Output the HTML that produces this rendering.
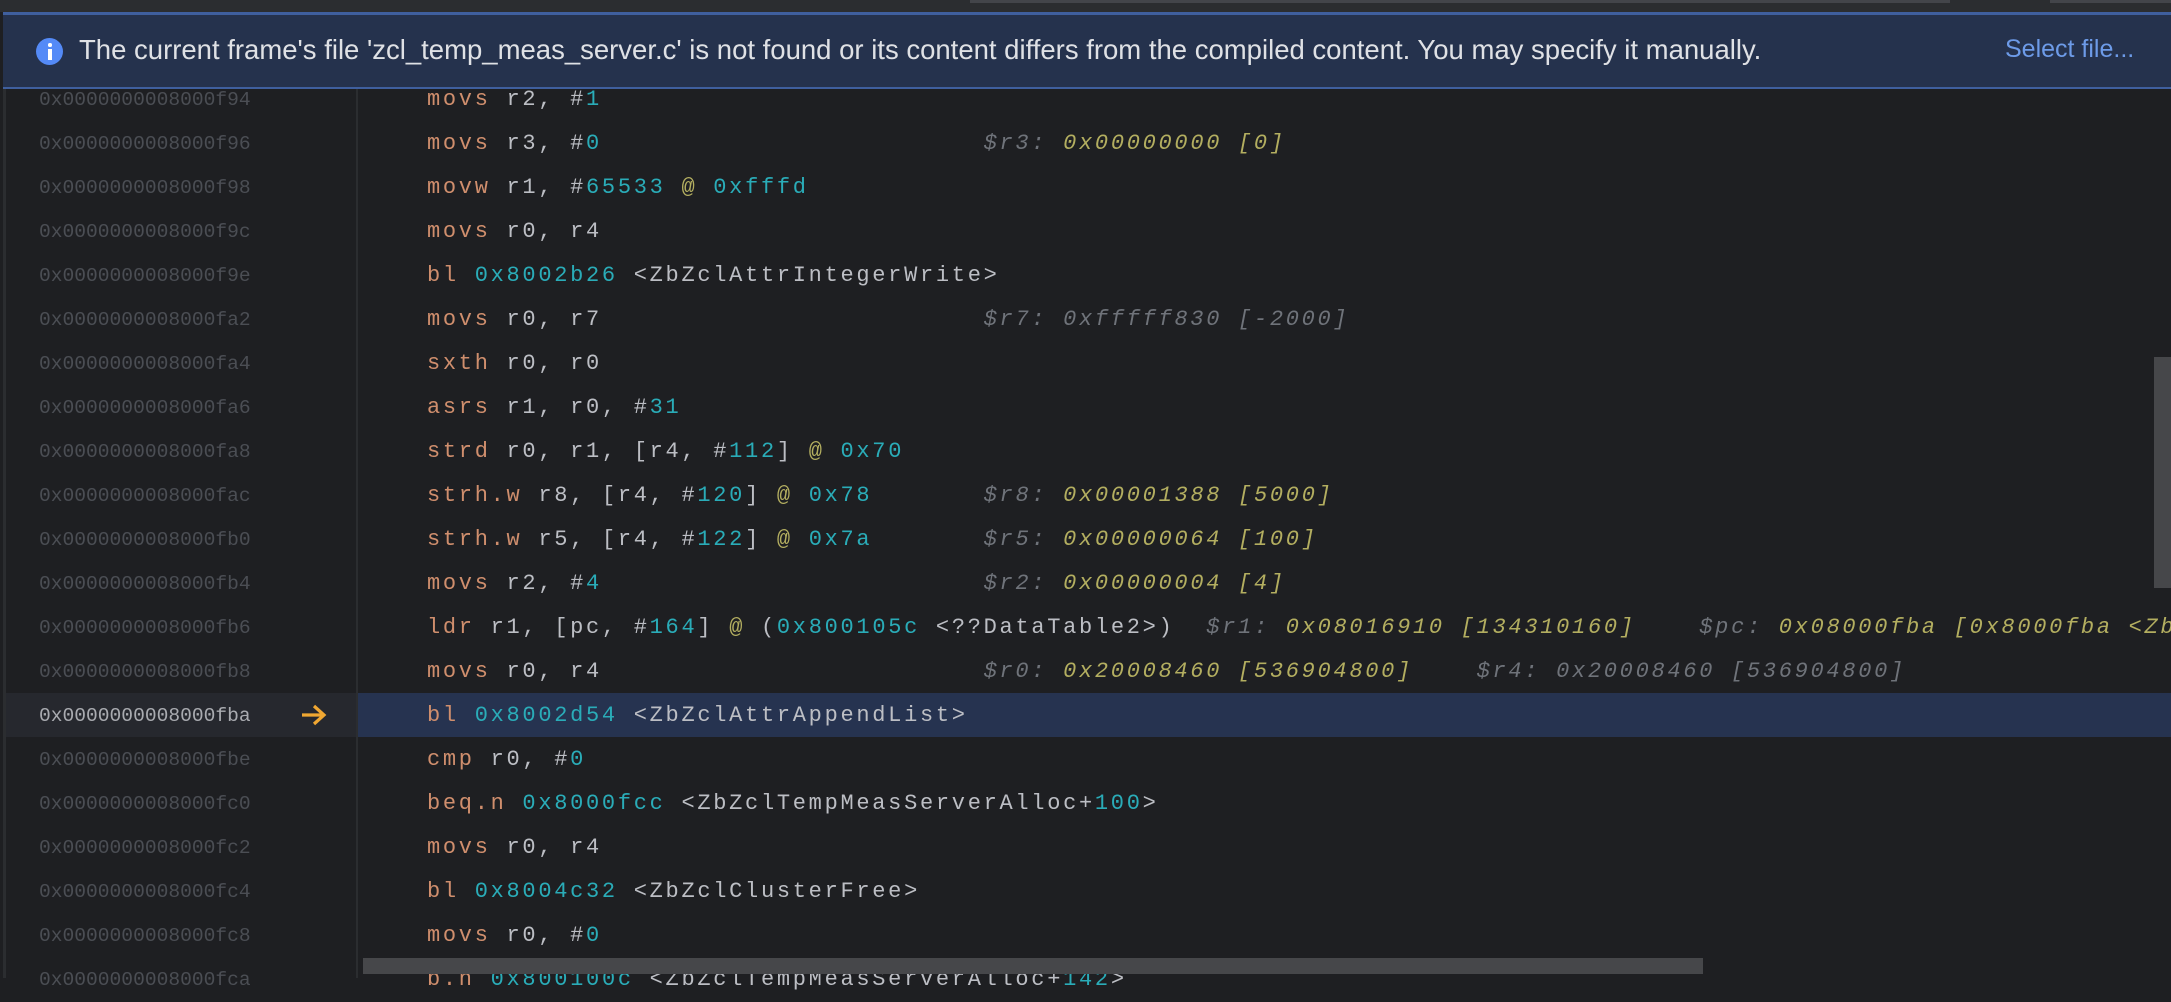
<!DOCTYPE html>
<html><head><meta charset="utf-8"><style>
*{margin:0;padding:0;box-sizing:border-box}
body{width:2171px;height:978px;overflow:hidden;background:#1e1f22;position:relative;font-family:"Liberation Mono",monospace;}
.top{position:absolute;left:0;top:0;width:2171px;height:12px;background:#2b2d30}
.top .t{position:absolute;top:0;height:3px;background:#43454a}
.banner{position:absolute;left:3px;top:12px;width:2168px;height:77px;background:#25324d;border-top:3px solid #3f5f9e;border-bottom:2px solid #3f5f9e;font-family:"Liberation Sans",sans-serif;font-size:27.5px;color:#dfe1e5;overflow:hidden}
.banner .msg{position:absolute;left:76px;top:19px;white-space:nowrap}
.banner .sel{position:absolute;left:2002px;top:20px;color:#6d9be8;white-space:nowrap;font-size:25px}
.icon{position:absolute;left:33px;top:23px;width:27px;height:27px;border-radius:50%;background:#548af7}
.icon:before{content:"";position:absolute;left:12px;top:5px;width:3.5px;height:3.5px;border-radius:50%;background:#fff}
.icon:after{content:"";position:absolute;left:12px;top:11px;width:3.5px;height:11px;background:#fff}
.lb{position:absolute;left:3px;top:89px;width:3px;height:889px;background:#2b2d30}
.div{position:absolute;left:356px;top:89px;width:2px;height:889px;background:#2b2d30}
.row{position:absolute;left:0;height:44px;width:2171px;font-size:19.6px;line-height:44px;white-space:pre;overflow:hidden}
.a{position:absolute;left:39px;color:#4b4e54}
.c{position:absolute;left:427px;color:#bcbec4;font-size:22px;letter-spacing:2.7px}
.m{color:#cf8e6d}.n{color:#2aacb8}.y{color:#b3ae60}
.g{color:#6f737a;font-style:italic}.v{color:#b3ae60;font-style:italic}.gv{color:#6f737a;font-style:italic}
.hlg{position:absolute;left:6px;top:693px;width:350px;height:44px;background:#26282e}
.hlc{position:absolute;left:358px;top:693px;width:1813px;height:44px;background:#263350}
.hs{position:absolute;left:363px;top:958px;width:1340px;height:16px;background:#46474a}
.vs{position:absolute;left:2154px;top:357px;width:17px;height:231px;background:#46474a}
</style></head><body>
<div class="hlg"></div><div class="hlc"></div>
<div class="lb"></div><div class="div"></div>

<div class="row" style="top:78px"><span class="a">0x0000000008000f94</span><span class="c"><span class="m">movs</span> r2, #<span class="n">1</span></span></div>
<div class="row" style="top:122px"><span class="a">0x0000000008000f96</span><span class="c"><span class="m">movs</span> r3, #<span class="n">0</span>                        <span class="g">$r3: </span><span class="v">0x00000000 [0]</span></span></div>
<div class="row" style="top:166px"><span class="a">0x0000000008000f98</span><span class="c"><span class="m">movw</span> r1, #<span class="n">65533</span> <span class="y">@</span> <span class="n">0xfffd</span></span></div>
<div class="row" style="top:210px"><span class="a">0x0000000008000f9c</span><span class="c"><span class="m">movs</span> r0, r4</span></div>
<div class="row" style="top:254px"><span class="a">0x0000000008000f9e</span><span class="c"><span class="m">bl</span> <span class="n">0x8002b26</span> &lt;ZbZclAttrIntegerWrite&gt;</span></div>
<div class="row" style="top:298px"><span class="a">0x0000000008000fa2</span><span class="c"><span class="m">movs</span> r0, r7                        <span class="g">$r7: 0xfffff830 [-2000]</span></span></div>
<div class="row" style="top:342px"><span class="a">0x0000000008000fa4</span><span class="c"><span class="m">sxth</span> r0, r0</span></div>
<div class="row" style="top:386px"><span class="a">0x0000000008000fa6</span><span class="c"><span class="m">asrs</span> r1, r0, #<span class="n">31</span></span></div>
<div class="row" style="top:430px"><span class="a">0x0000000008000fa8</span><span class="c"><span class="m">strd</span> r0, r1, [r4, #<span class="n">112</span>] <span class="y">@</span> <span class="n">0x70</span></span></div>
<div class="row" style="top:474px"><span class="a">0x0000000008000fac</span><span class="c"><span class="m">strh.w</span> r8, [r4, #<span class="n">120</span>] <span class="y">@</span> <span class="n">0x78</span>       <span class="g">$r8: </span><span class="v">0x00001388 [5000]</span></span></div>
<div class="row" style="top:518px"><span class="a">0x0000000008000fb0</span><span class="c"><span class="m">strh.w</span> r5, [r4, #<span class="n">122</span>] <span class="y">@</span> <span class="n">0x7a</span>       <span class="g">$r5: </span><span class="v">0x00000064 [100]</span></span></div>
<div class="row" style="top:562px"><span class="a">0x0000000008000fb4</span><span class="c"><span class="m">movs</span> r2, #<span class="n">4</span>                        <span class="g">$r2: </span><span class="v">0x00000004 [4]</span></span></div>
<div class="row" style="top:606px"><span class="a">0x0000000008000fb6</span><span class="c"><span class="m">ldr</span> r1, [pc, #<span class="n">164</span>] <span class="y">@</span> (<span class="n">0x800105c</span> &lt;??DataTable2&gt;)  <span class="g">$r1: </span><span class="v">0x08016910 [134310160]</span>    <span class="g">$pc: </span><span class="v">0x08000fba [0x8000fba &lt;Zb</span></span></div>
<div class="row" style="top:650px"><span class="a">0x0000000008000fb8</span><span class="c"><span class="m">movs</span> r0, r4                        <span class="g">$r0: </span><span class="v">0x20008460 [536904800]</span>    <span class="gv">$r4: 0x20008460 [536904800]</span></span></div>
<div class="row" style="top:694px"><span class="a" style="color:#a9abb0">0x0000000008000fba</span><span class="c"><span class="m">bl</span> <span class="n">0x8002d54</span> &lt;ZbZclAttrAppendList&gt;</span></div>
<svg style="position:absolute;left:301px;top:704px" width="26" height="22" viewBox="0 0 26 22"><path d="M1 11H22M13 2L23 11L13 20" stroke="#f0a732" stroke-width="3.2" fill="none"/></svg>
<div class="row" style="top:738px"><span class="a">0x0000000008000fbe</span><span class="c"><span class="m">cmp</span> r0, #<span class="n">0</span></span></div>
<div class="row" style="top:782px"><span class="a">0x0000000008000fc0</span><span class="c"><span class="m">beq.n</span> <span class="n">0x8000fcc</span> &lt;ZbZclTempMeasServerAlloc+<span class="n">100</span>&gt;</span></div>
<div class="row" style="top:826px"><span class="a">0x0000000008000fc2</span><span class="c"><span class="m">movs</span> r0, r4</span></div>
<div class="row" style="top:870px"><span class="a">0x0000000008000fc4</span><span class="c"><span class="m">bl</span> <span class="n">0x8004c32</span> &lt;ZbZclClusterFree&gt;</span></div>
<div class="row" style="top:914px"><span class="a">0x0000000008000fc8</span><span class="c"><span class="m">movs</span> r0, #<span class="n">0</span></span></div>
<div class="row" style="top:958px"><span class="a">0x0000000008000fca</span><span class="c"><span class="m">b.n</span> <span class="n">0x800100c</span> &lt;ZbZclTempMeasServerAlloc+<span class="n">142</span>&gt;</span></div>

<div class="hs"></div><div class="vs"></div>

<div class="top"><div class="t" style="left:970px;width:980px"></div><div class="t" style="left:2050px;width:121px"></div></div>
<div class="banner"><div class="icon"></div><span class="msg">The current frame's file 'zcl_temp_meas_server.c' is not found or its content differs from the compiled content. You may specify it manually.</span><span class="sel">Select file...</span></div>
</body></html>
